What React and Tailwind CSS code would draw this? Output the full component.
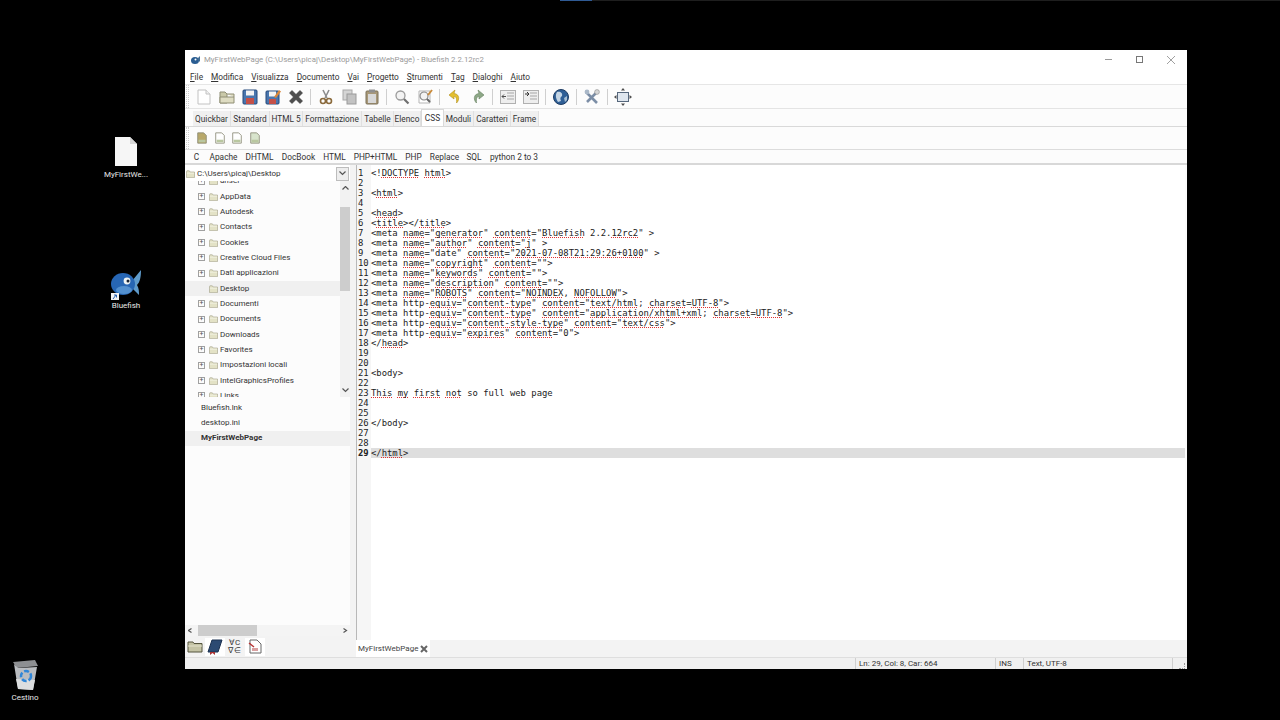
const ui = "font-['Roboto',sans-serif]";

const code = [
  '<!~DOCTYPE~ ~html~>',
  '',
  '<~html~>',
  '',
  '<~head~>',
  '<~title~></~title~>',
  '<meta ~name~="~generator~" ~content~="~Bluefish~ 2.2.~12rc2~" >',
  '<meta ~name~="~author~" ~content~="~j~" >',
  '<meta ~name~="date" ~content~="~2021-07-08T21:29:26+0100~" >',
  '<meta ~name~="~copyright~" ~content~="">',
  '<meta ~name~="~keywords~" ~content~="">',
  '<meta ~name~="~description~" ~content~="">',
  '<meta ~name~="~ROBOTS~" ~content~="~NOINDEX~, ~NOFOLLOW~">',
  '<meta http-~equiv~="~content-type~" ~content~="~text/html~; ~charset~=~UTF-8~">',
  '<meta http-~equiv~="~content-type~" ~content~="~application/xhtml+xml~; ~charset~=~UTF-8~">',
  '<meta http-~equiv~="~content-style-type~" ~content~="~text/css~">',
  '<meta http-~equiv~="~expires~" ~content~="0">',
  '</~head~>',
  '',
  '',
  '<body>',
  '',
  '~This~ ~my~ ~first~ ~not~ so full web page',
  '',
  '',
  '</body>',
  '',
  '',
  '</~html~>',
];

const menus = [
  ['F', 'ile'], ['M', 'odifica'], ['V', 'isualizza'], ['D', 'ocumento'], ['V', 'ai'],
  ['P', 'rogetto'], ['S', 'trumenti'], ['T', 'ag'], ['D', 'ialoghi'], ['A', 'iuto'],
];

const tabs = [
  ['Quickbar', 'w-[38px]'], ['Standard', 'w-[39px]'], ['HTML 5', 'w-[33px]'], ['Formattazione', 'w-[59px]'],
  ['Tabelle', 'w-[32px]'], ['Elenco', 'w-[27px]'], ['CSS', 'w-[23px]'], ['Moduli', 'w-[30px]'],
  ['Caratteri', 'w-[37px]'], ['Frame', 'w-[28px]'],
];

const langs = [
  ['C', 'w-[17px]'], ['Apache', 'w-[37px]'], ['DHTML', 'w-[35px]'], ['DocBook', 'w-[43px]'], ['HTML', 'w-[29px]'],
  ['PHP+HTML', 'w-[53px]'], ['PHP', 'w-[23px]'], ['Replace', 'w-[39px]'], ['SQL', 'w-[20px]'], ['python 2 to 3', 'w-[60px]'],
];

const folders = [
  ['ansel', true], ['AppData', true], ['Autodesk', true], ['Contacts', true], ['Cookies', true],
  ['Creative Cloud Files', true], ['Dati applicazioni', true], ['Desktop', false], ['Documenti', true],
  ['Documents', true], ['Downloads', true], ['Favorites', true], ['Impostazioni locali', true],
  ['IntelGraphicsProfiles', true], ['Links', true],
];

function Ico({ children, w = 18, h = 18, view = '0 0 18 18' }) {
  return <svg width={w} height={h} viewBox={view} className="shrink-0">{children}</svg>;
}

function Folder({ w = 9, h = 8 }) {
  return (
    <svg width={w} height={h} viewBox="0 0 11 10" className="shrink-0">
      <path d="M.5 2V9.5H10.5V2.5H5L4 1H1Z" fill="#e3e2c6" stroke="#a3a28a" strokeWidth=".8" />
      <path d="M1 4H10" stroke="#f5f5e6" />
    </svg>
  );
}

function Page({ tint = '#fff' }) {
  return (
    <Ico w={12} h={12} view="0 0 14 14">
      <path d="M2 1H9L12 4V13H2Z" fill={tint} stroke="#8c8c78" />
      <path d="M3 9H11V12H3Z" fill="#b9c7a0" />
    </Ico>
  );
}

function Grip() {
  return <span className="w-[3px] h-full ml-px mr-[3px] shrink-0 border-x border-dotted border-[#cccccc]" />;
}

const toolbar = [
  <Ico><path d="M3 2H11L15 6V16H3Z" fill="#fff" stroke="#c2c2c2" /><path d="M11 2V6H15" fill="#f0f0f0" stroke="#c2c2c2" /></Ico>,
  <Ico><path d="M2 4H7L9 6V15H2Z" fill="#c9c8a8" stroke="#8f8e74" /><path d="M9 6H16V15H2V9H16" fill="#dedcc2" stroke="#8f8e74" /></Ico>,
  <Ico><rect x="2" y="2" width="14" height="14" rx="1" fill="#4a76ae" stroke="#24497a" /><rect x="5" y="2.5" width="8" height="5" fill="#f4f4f4" /><rect x="5" y="10" width="8" height="6" fill="#c45048" /></Ico>,
  <Ico><rect x="2" y="3" width="13" height="13" rx="1" fill="#4a76ae" stroke="#24497a" /><rect x="5" y="3.5" width="7" height="5" fill="#f4f4f4" /><rect x="5" y="11" width="7" height="5" fill="#c45048" /><path d="M10 9L15 2L17 3.5L12 10Z" fill="#d9873a" /></Ico>,
  <Ico><path d="M2.5 5L5 2.5L9 6.5L13 2.5L15.5 5L11.5 9L15.5 13L13 15.5L9 11.5L5 15.5L2.5 13L6.5 9Z" fill="#4e4e4e" stroke="#333" strokeWidth=".6" /></Ico>,
  'sep',
  <Ico><path d="M6 2L10 10M12 2L8 10" stroke="#8d8d8d" strokeWidth="1.6" /><circle cx="6" cy="13" r="2.5" fill="none" stroke="#8a6a3c" strokeWidth="1.6" /><circle cx="12" cy="13" r="2.5" fill="none" stroke="#8a6a3c" strokeWidth="1.6" /></Ico>,
  <Ico><rect x="3" y="2" width="9" height="10" fill="#d5d5d5" stroke="#a8a8a8" /><rect x="7" y="6" width="9" height="10" fill="#c2c2c2" stroke="#9a9a9a" /></Ico>,
  <Ico><rect x="3" y="3" width="12" height="13" rx="1" fill="#a89878" stroke="#7b7058" /><rect x="5" y="6" width="8" height="9" fill="#d8d8d8" /><rect x="6" y="1.5" width="6" height="3" fill="#8f8f8f" /></Ico>,
  'sep',
  <Ico><circle cx="7.5" cy="7.5" r="4.5" fill="#f3f3f3" stroke="#9b9b9b" strokeWidth="1.3" /><path d="M11 11L15.5 15.5" stroke="#6f6f6f" strokeWidth="2.2" /></Ico>,
  <Ico><path d="M3 3H14V15H3Z" fill="#fff" stroke="#b5b5b5" /><circle cx="8" cy="8" r="4" fill="#f3f3f3" stroke="#8a8a8a" strokeWidth="1.2" /><path d="M11 11L14 14" stroke="#666" strokeWidth="2" /><path d="M12 7L16 2" stroke="#c98a3a" strokeWidth="2" /></Ico>,
  'sep',
  <Ico><path d="M9 2L3 7L8 11V8.5C10 8.5 11 10 10.5 15C13.5 12.5 14 6 8 5.5Z" fill="#e4bf2e" stroke="#b08f1c" strokeWidth=".6" /></Ico>,
  <Ico><path d="M9 2L15 7L10 11V8.5C8 8.5 7 10 7.5 15C4.5 12.5 4 6 10 5.5Z" fill="#8da887" stroke="#67805f" strokeWidth=".6" /></Ico>,
  'sep',
  <Ico><rect x="1.5" y="2.5" width="15" height="13" fill="#eee" stroke="#b0b0b0" /><path d="M8 5H15M8 8H15M8 11H15" stroke="#a6a6a6" /><path d="M3 8.5H7M3 8.5L5 6.5M3 8.5L5 10.5" stroke="#4d4d4d" fill="none" /></Ico>,
  <Ico><rect x="1.5" y="2.5" width="15" height="13" fill="#eee" stroke="#b0b0b0" /><path d="M8 5H15M8 8H15M8 11H15" stroke="#a6a6a6" /><path d="M3 6H7M7 6L5 4M7 6L5 8" stroke="#333" fill="none" /></Ico>,
  'sep',
  <Ico><circle cx="9" cy="9" r="7.5" fill="#2f5f96" stroke="#1e3c63" /><path d="M5 4C8 3 11 5 10 8C8 9 8 11 9 13L6 14C4 11 3 7 5 4Z" fill="#c5d5e4" /><path d="M12 10L15 8L15 12L13 14Z" fill="#a7bfd4" /></Ico>,
  'sep2',
  <Ico><path d="M3 4L14 15M15 3L4 14" stroke="#7c8ea6" strokeWidth="2.6" /><circle cx="4" cy="4" r="2.4" fill="#aab8c8" /><circle cx="14" cy="4" r="2.4" fill="#d6d6d6" stroke="#8c8c8c" strokeWidth=".6" /></Ico>,
  'sep2',
  <Ico><rect x="3.5" y="4.5" width="11" height="9" fill="#dfe6ee" stroke="#56677c" /><path d="M9 0L11 2.5H7ZM9 18L7 15.5H11ZM0 9L2.5 7V11ZM18 9L15.5 11V7Z" fill="#4d4d4d" /></Ico>,
];

function Code({ line }) {
  return line.split('~').map((part, i) =>
    i % 2 ? (
      <span key={i} className="underline decoration-dotted decoration-[#e03030] decoration-1 underline-offset-[1px] [text-decoration-skip-ink:none]">{part}</span>
    ) : (
      <span key={i}>{part}</span>
    )
  );
}

function Desktop({ label, children, className }) {
  return (
    <div className={`absolute flex flex-col items-center text-[8px] text-[#e8e8e8] ${ui} ${className}`}>
      {children}
      <span className="leading-[11px]">{label}</span>
    </div>
  );
}

function Arrow({ d }) {
  return <svg width="7" height="5" viewBox="0 0 7 5"><path d={d} fill="none" stroke="#555" strokeWidth="1.2" /></svg>;
}

export default function App() {
  return (
    <div className={`relative w-[1280px] h-[720px] overflow-hidden bg-black ${ui}`}>
      <div className="absolute top-0 left-[560px] right-0 h-px bg-[#1e1e1e]" />
      <div className="absolute top-0 left-[560px] w-[32px] h-px bg-[#2f5a94]" />

      <Desktop label="MyFirstWe..." className="left-[100px] top-[136px] w-[52px]">
        <svg width="24" height="31" viewBox="0 0 24 31" className="mb-[2px]">
          <path d="M1 1H16L23 8V30H1Z" fill="#f6f6f6" />
          <path d="M16 1V8H23Z" fill="#d5d5d5" />
        </svg>
      </Desktop>
      <Desktop label="Bluefish" className="left-[100px] top-[268px] w-[52px]">
        <svg width="32" height="32" viewBox="0 0 32 32">
          <path d="M22 13L31 2C31 9 30 14 27 17C29 20 29 24 29 27L23 21Z" fill="#5f9bcb" />
          <ellipse cx="13" cy="16" rx="12" ry="11" fill="#2766b4" />
          <ellipse cx="14" cy="22" rx="8" ry="4" fill="#5390cf" />
          <circle cx="17" cy="13" r="3.4" fill="#f0f4f4" />
          <circle cx="18" cy="13" r="1.5" fill="#142032" />
          <rect x="1" y="25" width="8" height="8" fill="#f2f2f2" />
          <path d="M3 31L6 27M4 27H6.5V29.5" stroke="#2a62b0" fill="none" />
        </svg>
      </Desktop>
      <Desktop label="Cestino" className="left-0 top-[659px] w-[50px]">
        <svg width="28" height="32" viewBox="0 0 28 32" className="mb-px">
          <path d="M2 3L24 1L27 7L6 9Z" fill="#8d8f92" />
          <path d="M3 5L7 30L22 31L26 8L7 9Z" fill="#b9bcc0" />
          <path d="M5 20L7 30L22 31L24 21Z" fill="#dcdee0" />
          <circle cx="15" cy="17" r="5" fill="none" stroke="#2f86d8" strokeWidth="2.5" strokeDasharray="5 2" />
        </svg>
      </Desktop>

      <div className="absolute left-[185px] top-[50px] w-[1002px] h-[619px] flex flex-col bg-[#fcfcfc] text-[#333] text-[8.3px]">
        <div className="h-[18px] shrink-0 flex items-center pl-[5px] pt-px bg-white text-[#9a9a9a] text-[7.85px]">
          <svg width="10" height="10" viewBox="0 0 10 10" className="mr-[4px]">
            <ellipse cx="5" cy="5.5" rx="4" ry="3.6" fill="#2a5d92" />
            <path d="M7 4L10 1V7Z" fill="#446f96" />
            <circle cx="5.5" cy="4.5" r="1" fill="#fff" />
          </svg>
          <span className="flex-1 whitespace-nowrap">MyFirstWebPage (C:\Users\picaj\Desktop\MyFirstWebPage) - Bluefish 2.2.12rc2</span>
          <div className="flex items-center text-[#8a8a8a]">
            <div className="w-[31px] flex justify-center"><span className="w-[7px] h-px bg-[#999]" /></div>
            <div className="w-[31px] flex justify-center"><span className="w-[7px] h-[7px] border border-[#777]" /></div>
            <div className="w-[31px] flex justify-center mr-[1px]">
              <svg width="8" height="8" viewBox="0 0 8 8"><path d="M0 0L8 8M8 0L0 8" stroke="#888" strokeWidth=".8" /></svg>
            </div>
          </div>
        </div>

        <div className="h-[17px] shrink-0 flex items-center pl-[5px] pt-[2px] gap-[8px] bg-white border-b border-[#e6e6e6]">
          {menus.map(([key, rest], i) => (
            <span key={i}><span className="underline">{key}</span>{rest}</span>
          ))}
        </div>

        <div className="h-[24px] shrink-0 flex items-center border-b border-[#e4e4e4]">
          <Grip />
          {toolbar.map((item, i) =>
            item === 'sep' || item === 'sep2' ? (
              <span key={i} className={`${item === 'sep' ? 'w-[7px]' : 'w-[8px]'} h-[16px] flex justify-center`}><span className="w-px bg-[#cfcfcf]" /></span>
            ) : (
              <span key={i} className="w-[23px] flex justify-center">{item}</span>
            )
          )}
        </div>

        <div className="h-[18px] shrink-0 flex items-end pl-[8px] border-b border-[#d9d9d9]">
          {tabs.map(([label, width]) => (
            <span
              key={label}
              className={`${width} flex justify-center items-center whitespace-nowrap overflow-hidden ${
                label === 'CSS' ? 'h-[17px] bg-white border-x border-t border-[#d9d9d9]' : 'h-[15px] pt-px bg-[#f0f0f0] border-r border-[#e0e0e0]'
              }`}
            >
              {label}
            </span>
          ))}
        </div>

        <div className="h-[23px] shrink-0 flex items-center gap-[5.5px] border-b border-[#dcdcdc]">
          <Grip />
          {[1, 2, 3, 4].map((n) => (
            <span key={n} className={`w-[12px] ${n === 1 ? '-ml-[1.5px]' : ''}`}><Page tint={n === 1 ? '#b8a86a' : n === 4 ? '#d8e4cc' : '#fff'} /></span>
          ))}
        </div>

        <div className="h-[15px] shrink-0 flex items-center pl-[3px] pt-px border-b-2 border-[#d8d8d8]">
          {langs.map(([label, width]) => (
            <span key={label} className={`${width} text-center whitespace-nowrap`}>{label}</span>
          ))}
        </div>

        <div className="flex-1 min-h-0 flex text-[8px]">
          <div className="w-[165px] shrink-0 flex flex-col">
            <div className="h-[16px] shrink-0 flex items-center pl-[1px] pr-[1px] pt-px bg-white z-10">
              <Folder />
              <span className="ml-[2px] flex-1">C:\Users\picaj\Desktop</span>
              <span className="w-[13px] h-[14px] flex items-center justify-center border border-[#bdbdbd] bg-[#eee]">
                <Arrow d="M.5 .5L3.5 3.5L6.5 .5" />
              </span>
            </div>

            <div className="h-[216px] shrink-0 flex overflow-hidden">
              <div className="flex-1 min-w-0 overflow-hidden">
                <div className="-mt-[7.5px]">
                  {folders.map(([name, plus]) => (
                    <div key={name} className={`h-[15.35px] flex items-center ${name === 'Desktop' ? 'bg-[#f0f0f0]' : ''}`}>
                      <span className="w-[11px] ml-[13px] shrink-0">
                        {plus && (
                          <span className="w-[7px] h-[7px] border border-[#a0a0a0] text-[#555] flex items-center justify-center text-[7px] leading-none">+</span>
                        )}
                      </span>
                      <Folder />
                      <span className="ml-[2px] whitespace-nowrap">{name}</span>
                    </div>
                  ))}
                </div>
              </div>
              <div className="w-[10px] shrink-0 flex flex-col items-center bg-[#f2f2f2]">
                <div className="h-[14px] flex items-center"><Arrow d="M.5 3.5L3.5 .5L6.5 3.5" /></div>
                <div className="mt-[12px] h-[84px] w-full bg-[#cdcdcd]" />
                <div className="mt-auto h-[14px] flex items-center"><Arrow d="M.5 .5L3.5 3.5L6.5 .5" /></div>
              </div>
            </div>

            <div className="flex-1 min-h-0 pt-[3px]">
              {['Bluefish.lnk', 'desktop.ini', 'MyFirstWebPage'].map((name, i) => (
                <div key={name} className={`h-[15.35px] flex items-center pl-[16px] ${i === 2 ? 'bg-[#f0f0f0] font-bold' : ''}`}>
                  {name}
                </div>
              ))}
            </div>

            <div className="h-[11px] shrink-0 flex items-center bg-[#f4f4f4]">
              <span className="w-[13px] flex justify-center"><Arrow d="M3.5 .5L.5 2.5L3.5 4.5" /></span>
              <span className="w-[59px] h-full bg-[#cdcdcd]" />
              <span className="ml-auto mr-[2px]"><Arrow d="M2.5 .5L5.5 2.5L2.5 4.5" /></span>
            </div>

            <div className="h-[21px] shrink-0 flex items-center bg-[#f3f3f3]">
              <span className="w-[20px] h-[18px] flex items-center justify-center">
                <svg width="16" height="13" viewBox="0 0 16 13"><path d="M1 2H6L7 3.5H15V12H1Z" fill="#c4c3a5" stroke="#55553f" /><path d="M1 6H15" stroke="#e3e2cc" /></svg>
              </span>
              <span className="w-[20px] h-[18px] flex items-center justify-center bg-white">
                <svg width="16" height="16" viewBox="0 0 16 16"><path d="M5 1H15L11 13H1Z" fill="#2c4a72" stroke="#1b3150" /><path d="M3 13H8V16L5.5 14L3 16Z" fill="#a83232" /></svg>
              </span>
              <span className="w-[20px] h-[18px] text-[8px] leading-[8px] pt-px text-[#333] text-center tracking-[1px]">∀C<br />∇∈</span>
              <span className="w-[20px] h-[18px] flex items-center justify-center bg-white">
                <svg width="14" height="15" viewBox="0 0 14 15"><path d="M2 1H9L13 5V14H2Z" fill="#fff" stroke="#666" /><path d="M4 9H10V12H4Z" fill="#d9a0a0" /><path d="M1 4L6 8" stroke="#b83030" strokeWidth="1.4" /></svg>
              </span>
            </div>
          </div>

          <div className="w-[6px] shrink-0 bg-[#f3f3f3]" />

          <div className="flex-1 min-w-0 flex flex-col">
            <div className="h-[475px] shrink-0 mr-[2px] flex bg-white border-l border-[#b8b8b8] pt-[3px] font-['DejaVu_Sans_Mono',monospace] text-[8.9px] leading-[10px] text-[#222]">
              <div className="w-[14px] -mt-[3px] pt-[3px] shrink-0 pl-px bg-[#f6f6f6]">
                {code.map((_, i) => (
                  <div key={i} className={`h-[10px] ${i === 28 ? 'font-bold' : ''}`}>{i + 1}</div>
                ))}
              </div>
              <div className="flex-1 min-w-0">
                {code.map((line, i) => (
                  <div key={i} className={`h-[10px] whitespace-pre ${i === 28 ? 'bg-[#dedede]' : ''}`}>
                    <Code line={line} />
                  </div>
                ))}
              </div>
            </div>

            <div className="h-[17px] shrink-0 flex bg-[#f3f3f3]">
              <span className="w-[74px] flex items-center pl-[2px] gap-[2px] bg-white text-[#444] whitespace-nowrap">
                MyFirstWebPage
                <svg width="8" height="8" viewBox="0 0 8 8" className="shrink-0"><path d="M1 1L7 7M7 1L1 7" stroke="#666" strokeWidth="2" /></svg>
              </span>
            </div>
          </div>
        </div>

        <div className="h-[12px] shrink-0 flex items-center bg-[#f0f0f0] border-t border-[#dedede] text-[#333] text-[8px]">
          <span className="w-[670px]" />
          <span className="w-[140px] h-full flex items-center pl-[3px] border-l border-[#cfcfcf]">Ln: 29, Col: 8, Car: 664</span>
          <span className="w-[28px] h-full flex items-center pl-[3px] border-l border-[#cfcfcf]">INS</span>
          <span className="w-[150px] h-full flex items-center pl-[3px] border-x border-[#cfcfcf]">Text, UTF-8</span>
          <span className="ml-auto mr-[2px] mt-[4px] w-[6px] h-[6px] border-b border-r border-dotted border-[#999]" />
        </div>
      </div>
    </div>
  );
}
